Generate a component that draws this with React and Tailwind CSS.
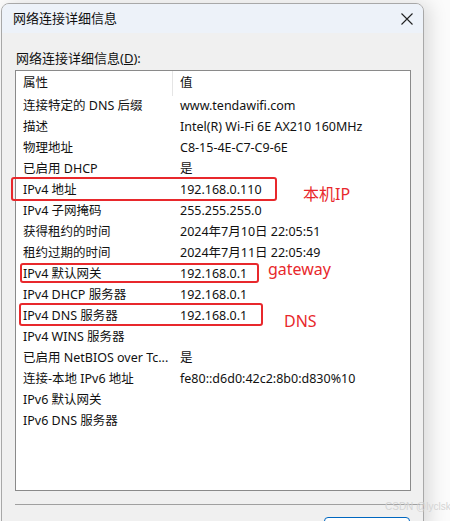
import React from "react";

const rows = [
  ["连接特定的 DNS 后缀", "www.tendawifi.com"],
  ["描述", "Intel(R) Wi-Fi 6E AX210 160MHz"],
  ["物理地址", "C8-15-4E-C7-C9-6E"],
  ["已启用 DHCP", "是"],
  ["IPv4 地址", "192.168.0.110"],
  ["IPv4 子网掩码", "255.255.255.0"],
  ["获得租约的时间", "2024年7月10日 22:05:51"],
  ["租约过期的时间", "2024年7月11日 22:05:49"],
  ["IPv4 默认网关", "192.168.0.1"],
  ["IPv4 DHCP 服务器", "192.168.0.1"],
  ["IPv4 DNS 服务器", "192.168.0.1"],
  ["IPv4 WINS 服务器", ""],
  ["已启用 NetBIOS over Tc...", "是"],
  ["连接-本地 IPv6 地址", "fe80::d6d0:42c2:8b0:d830%10"],
  ["IPv6 默认网关", ""],
  ["IPv6 DNS 服务器", ""],
];

const font = { fontFamily: '"Segoe UI", "Noto Sans", "Noto Sans CJK SC", sans-serif' };

export default function App() {
  return (
    <div
      className="relative w-[450px] h-[521px] overflow-hidden bg-[#fbfbfb] text-[#111] text-[12.5px]"
      style={font}
    >
      <div className="ml-[1px] mt-[3px] w-[423px] h-[530px] border border-[#a8a8a8] rounded-tr-[8px] rounded-tl-[8px] bg-[#f0f0f0] shadow-[6px_0_18px_rgba(0,0,0,0.13)] overflow-hidden">
        <div className="h-[29px] bg-[#edf2f9] flex items-center justify-between pl-[11px] pr-[8px]">
          <span className="leading-none text-[13px]">网络连接详细信息</span>
          <svg width="14" height="14" viewBox="0 0 14 14" className="mr-[1px]">
            <path d="M1.5 1.5 L12.5 12.5 M12.5 1.5 L1.5 12.5" stroke="#222" strokeWidth="1.1" fill="none" />
          </svg>
        </div>
        <div className="px-[13px] pt-[17px]">
          <div className="leading-[16px] pl-[1px] text-[13px]">
            网络连接详细信息(<span className="underline">D</span>):
          </div>
          <div className="mt-[4px] w-[396px] h-[421px] border border-[#8a8a8a] bg-white">
            <div className="flex h-[25px] items-center">
              <div className="w-[157px] pl-[7px] h-full flex items-center border-r border-[#e5e5e5]">属性</div>
              <div className="pl-[7px]">值</div>
            </div>
            {rows.map(([k, v], i) => (
              <div key={i} className="flex h-[21px] items-center whitespace-nowrap">
                <div className="w-[157px] pl-[7px] overflow-hidden">{k}</div>
                <div className="pl-[7px]">{v}</div>
              </div>
            ))}
          </div>
          <div className="mt-[13px] -mr-[13px] border-t border-[#a0a0a0]"></div>
          <div className="flex justify-end mt-[12px]">
            <div className="w-[86px] h-[24px] rounded-[4px] border border-[#0067c0] bg-white"></div>
          </div>
        </div>
      </div>

      {/* annotations */}
      <div className="absolute left-[11px] top-[177px] w-[266px] h-[24px] border-[2.5px] border-[#e8282c] rounded-[3px]"></div>
      <div className="absolute left-[20px] top-[263px] w-[239px] h-[20px] border-[2.5px] border-[#e8282c] rounded-[3px]"></div>
      <div className="absolute left-[19px] top-[303px] w-[244px] h-[23px] border-[2.5px] border-[#e8282c] rounded-[3px]"></div>
      <div className="absolute left-[303px] top-[184px] text-[16px] leading-[20px] text-[#e8282c] whitespace-nowrap">本机IP</div>
      <div className="absolute left-[268px] top-[259px] text-[16px] leading-[20px] text-[#e8282c] whitespace-nowrap">gateway</div>
      <div className="absolute left-[284px] top-[311px] text-[16px] leading-[20px] text-[#e8282c] whitespace-nowrap">DNS</div>
      <div
        className="absolute left-[385px] top-[500px] text-[10px] leading-[14px] text-[#d4d4d4] whitespace-nowrap"
        style={{ fontFamily: '"Liberation Sans", sans-serif' }}
      >
        CSDN @lyclsk
      </div>
    </div>
  );
}
